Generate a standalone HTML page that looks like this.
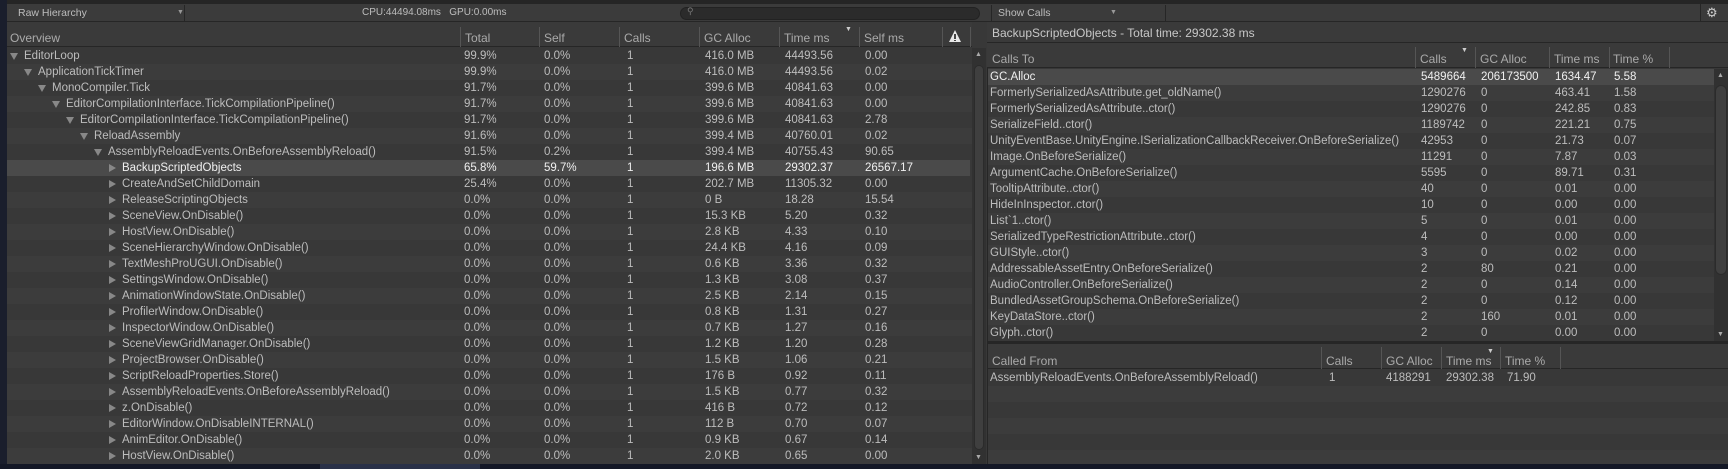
<!DOCTYPE html>
<html><head><meta charset="utf-8">
<style>
*{margin:0;padding:0;box-sizing:border-box}
body{width:1728px;height:469px;overflow:hidden;background:#161a26;font-family:"Liberation Sans",sans-serif;font-size:11.5px;color:#bdbdbd;position:relative}
.a{position:absolute;white-space:nowrap}
.r{position:absolute;height:16px;line-height:17px}
.r span{position:absolute;top:0;white-space:nowrap}
.o{background:#383838}.e{background:#3c3c3c}
.sel{background:#4a4a4a;color:#f0f0f0}
.sep{position:absolute;width:1px;background:#555}
.tri{position:absolute;top:4px;width:0;height:0}
.dn{border-left:4px solid transparent;border-right:4px solid transparent;border-top:7px solid #888;top:5px}
.rt{border-top:4px solid transparent;border-bottom:4px solid transparent;border-left:7px solid #888}
</style></head><body>
<div class="a" style="left:0;top:0;width:1728px;height:4px;background:#252525"></div>
<div class="a" style="left:0;top:0;width:7px;height:469px;background:#1a1e2c"></div>
<div class="a" style="left:7px;top:4px;width:1721px;height:18px;background:#3b3b3b;border-bottom:1px solid #262626"></div>
<div class="a" style="left:13px;top:5px;width:172px;height:16px;border-right:1px solid #262626;line-height:16px;font-size:10.5px;padding-left:5px">Raw Hierarchy<span style="position:absolute;left:164px;top:0;font-size:7px;color:#999">▼</span></div>
<div class="a" style="left:362px;top:5px;line-height:16px;font-size:10px">CPU:44494.08ms&nbsp;&nbsp;&nbsp;GPU:0.00ms</div>
<div class="a" style="left:680px;top:7px;width:300px;height:13px;border-radius:7px;background:#2b2b2b;border:1px solid #222"></div>
<div class="a" style="left:687px;top:6px;font-size:9px;color:#777">⚲</div>
<div class="a" style="left:991px;top:5px;width:175px;height:16px;border-left:1px solid #262626;border-right:1px solid #262626;line-height:16px;font-size:10.5px;padding-left:6px">Show Calls<span style="position:absolute;left:118px;top:0;font-size:7px;color:#999">▼</span></div>
<div class="a" style="left:1700px;top:4px;width:28px;height:18px;border-left:1px solid #262626;color:#ccc;font-size:13px;line-height:17px;padding-left:5px">⚙</div>

<div class="a" style="left:7px;top:22px;width:980px;height:442px;background:#383838"></div>
<div class="a" style="left:7px;top:22px;width:965px;height:25px;background:#3a3a3a;border-bottom:1px solid #262626"></div>
<div class="a" style="left:10px;top:31px;font-size:12px;color:#aaa">Overview</div>
<div class="sep" style="left:460px;top:27px;height:20px"></div><div class="a" style="left:465px;top:31px;font-size:12px;color:#aaa">Total</div>
<div class="sep" style="left:539px;top:27px;height:20px"></div><div class="a" style="left:544px;top:31px;font-size:12px;color:#aaa">Self</div>
<div class="sep" style="left:619px;top:27px;height:20px"></div><div class="a" style="left:624px;top:31px;font-size:12px;color:#aaa">Calls</div>
<div class="sep" style="left:699px;top:27px;height:20px"></div><div class="a" style="left:704px;top:31px;font-size:12px;color:#aaa">GC Alloc</div>
<div class="sep" style="left:779px;top:27px;height:20px"></div><div class="a" style="left:784px;top:31px;font-size:12px;color:#aaa">Time ms</div>
<div class="a" style="left:845px;top:26px;font-size:7px;color:#ccc">▼</div>
<div class="sep" style="left:859px;top:27px;height:20px"></div><div class="a" style="left:864px;top:31px;font-size:12px;color:#aaa">Self ms</div>
<div class="sep" style="left:942px;top:27px;height:20px"></div>
<div class="a" style="left:949px;top:30px;width:0;height:0;border-left:6px solid transparent;border-right:6px solid transparent;border-bottom:12px solid #e8e8e8"></div>
<div class="a" style="left:954px;top:34px;width:2px;height:5px;background:#444"></div>
<div class="a" style="left:954px;top:40px;width:2px;height:1px;background:#444"></div>
<div class="sep" style="left:970px;top:27px;height:20px"></div>
<div class="a" style="left:972px;top:48px;width:14px;height:416px;background:#313131"></div>
<div class="a" style="left:975px;top:51px;font-size:7px;color:#aaa">▲</div>
<div class="a" style="left:975px;top:454px;font-size:7px;color:#aaa">▼</div>
<div class="a" style="left:974px;top:65px;width:10px;height:385px;border-radius:5px;background:#3f3f3f;border:1px solid #2b2b2b"></div>

<div style="position:absolute;left:7px;top:48px;width:965px">
<div class="r o" style="top:0;width:965px"><i class="tri dn" style="left:3px"></i><span style="left:17px">EditorLoop</span><span style="left:457px">99.9%</span><span style="left:537px">0.0%</span><span style="left:620px">1</span><span style="left:698px">416.0 MB</span><span style="left:778px">44493.56</span><span style="left:858px">0.00</span></div>
<div class="r e" style="top:16px;width:965px"><i class="tri dn" style="left:17px"></i><span style="left:31px">ApplicationTickTimer</span><span style="left:457px">99.9%</span><span style="left:537px">0.0%</span><span style="left:620px">1</span><span style="left:698px">416.0 MB</span><span style="left:778px">44493.56</span><span style="left:858px">0.02</span></div>
<div class="r o" style="top:32px;width:965px"><i class="tri dn" style="left:31px"></i><span style="left:45px">MonoCompiler.Tick</span><span style="left:457px">91.7%</span><span style="left:537px">0.0%</span><span style="left:620px">1</span><span style="left:698px">399.6 MB</span><span style="left:778px">40841.63</span><span style="left:858px">0.00</span></div>
<div class="r e" style="top:48px;width:965px"><i class="tri dn" style="left:45px"></i><span style="left:59px">EditorCompilationInterface.TickCompilationPipeline()</span><span style="left:457px">91.7%</span><span style="left:537px">0.0%</span><span style="left:620px">1</span><span style="left:698px">399.6 MB</span><span style="left:778px">40841.63</span><span style="left:858px">0.00</span></div>
<div class="r o" style="top:64px;width:965px"><i class="tri dn" style="left:59px"></i><span style="left:73px">EditorCompilationInterface.TickCompilationPipeline()</span><span style="left:457px">91.7%</span><span style="left:537px">0.0%</span><span style="left:620px">1</span><span style="left:698px">399.6 MB</span><span style="left:778px">40841.63</span><span style="left:858px">2.78</span></div>
<div class="r e" style="top:80px;width:965px"><i class="tri dn" style="left:73px"></i><span style="left:87px">ReloadAssembly</span><span style="left:457px">91.6%</span><span style="left:537px">0.0%</span><span style="left:620px">1</span><span style="left:698px">399.4 MB</span><span style="left:778px">40760.01</span><span style="left:858px">0.02</span></div>
<div class="r o" style="top:96px;width:965px"><i class="tri dn" style="left:87px"></i><span style="left:101px">AssemblyReloadEvents.OnBeforeAssemblyReload()</span><span style="left:457px">91.5%</span><span style="left:537px">0.2%</span><span style="left:620px">1</span><span style="left:698px">399.4 MB</span><span style="left:778px">40755.43</span><span style="left:858px">90.65</span></div>
<div class="r sel" style="top:112px;width:963px"><i class="tri rt" style="left:102px"></i><span style="left:115px">BackupScriptedObjects</span><span style="left:457px">65.8%</span><span style="left:537px">59.7%</span><span style="left:620px">1</span><span style="left:698px">196.6 MB</span><span style="left:778px">29302.37</span><span style="left:858px">26567.17</span></div>
<div class="r o" style="top:128px;width:965px"><i class="tri rt" style="left:102px"></i><span style="left:115px">CreateAndSetChildDomain</span><span style="left:457px">25.4%</span><span style="left:537px">0.0%</span><span style="left:620px">1</span><span style="left:698px">202.7 MB</span><span style="left:778px">11305.32</span><span style="left:858px">0.00</span></div>
<div class="r e" style="top:144px;width:965px"><i class="tri rt" style="left:102px"></i><span style="left:115px">ReleaseScriptingObjects</span><span style="left:457px">0.0%</span><span style="left:537px">0.0%</span><span style="left:620px">1</span><span style="left:698px">0 B</span><span style="left:778px">18.28</span><span style="left:858px">15.54</span></div>
<div class="r o" style="top:160px;width:965px"><i class="tri rt" style="left:102px"></i><span style="left:115px">SceneView.OnDisable()</span><span style="left:457px">0.0%</span><span style="left:537px">0.0%</span><span style="left:620px">1</span><span style="left:698px">15.3 KB</span><span style="left:778px">5.20</span><span style="left:858px">0.32</span></div>
<div class="r e" style="top:176px;width:965px"><i class="tri rt" style="left:102px"></i><span style="left:115px">HostView.OnDisable()</span><span style="left:457px">0.0%</span><span style="left:537px">0.0%</span><span style="left:620px">1</span><span style="left:698px">2.8 KB</span><span style="left:778px">4.33</span><span style="left:858px">0.10</span></div>
<div class="r o" style="top:192px;width:965px"><i class="tri rt" style="left:102px"></i><span style="left:115px">SceneHierarchyWindow.OnDisable()</span><span style="left:457px">0.0%</span><span style="left:537px">0.0%</span><span style="left:620px">1</span><span style="left:698px">24.4 KB</span><span style="left:778px">4.16</span><span style="left:858px">0.09</span></div>
<div class="r e" style="top:208px;width:965px"><i class="tri rt" style="left:102px"></i><span style="left:115px">TextMeshProUGUI.OnDisable()</span><span style="left:457px">0.0%</span><span style="left:537px">0.0%</span><span style="left:620px">1</span><span style="left:698px">0.6 KB</span><span style="left:778px">3.36</span><span style="left:858px">0.32</span></div>
<div class="r o" style="top:224px;width:965px"><i class="tri rt" style="left:102px"></i><span style="left:115px">SettingsWindow.OnDisable()</span><span style="left:457px">0.0%</span><span style="left:537px">0.0%</span><span style="left:620px">1</span><span style="left:698px">1.3 KB</span><span style="left:778px">3.08</span><span style="left:858px">0.37</span></div>
<div class="r e" style="top:240px;width:965px"><i class="tri rt" style="left:102px"></i><span style="left:115px">AnimationWindowState.OnDisable()</span><span style="left:457px">0.0%</span><span style="left:537px">0.0%</span><span style="left:620px">1</span><span style="left:698px">2.5 KB</span><span style="left:778px">2.14</span><span style="left:858px">0.15</span></div>
<div class="r o" style="top:256px;width:965px"><i class="tri rt" style="left:102px"></i><span style="left:115px">ProfilerWindow.OnDisable()</span><span style="left:457px">0.0%</span><span style="left:537px">0.0%</span><span style="left:620px">1</span><span style="left:698px">0.8 KB</span><span style="left:778px">1.31</span><span style="left:858px">0.27</span></div>
<div class="r e" style="top:272px;width:965px"><i class="tri rt" style="left:102px"></i><span style="left:115px">InspectorWindow.OnDisable()</span><span style="left:457px">0.0%</span><span style="left:537px">0.0%</span><span style="left:620px">1</span><span style="left:698px">0.7 KB</span><span style="left:778px">1.27</span><span style="left:858px">0.16</span></div>
<div class="r o" style="top:288px;width:965px"><i class="tri rt" style="left:102px"></i><span style="left:115px">SceneViewGridManager.OnDisable()</span><span style="left:457px">0.0%</span><span style="left:537px">0.0%</span><span style="left:620px">1</span><span style="left:698px">1.2 KB</span><span style="left:778px">1.20</span><span style="left:858px">0.28</span></div>
<div class="r e" style="top:304px;width:965px"><i class="tri rt" style="left:102px"></i><span style="left:115px">ProjectBrowser.OnDisable()</span><span style="left:457px">0.0%</span><span style="left:537px">0.0%</span><span style="left:620px">1</span><span style="left:698px">1.5 KB</span><span style="left:778px">1.06</span><span style="left:858px">0.21</span></div>
<div class="r o" style="top:320px;width:965px"><i class="tri rt" style="left:102px"></i><span style="left:115px">ScriptReloadProperties.Store()</span><span style="left:457px">0.0%</span><span style="left:537px">0.0%</span><span style="left:620px">1</span><span style="left:698px">176 B</span><span style="left:778px">0.92</span><span style="left:858px">0.11</span></div>
<div class="r e" style="top:336px;width:965px"><i class="tri rt" style="left:102px"></i><span style="left:115px">AssemblyReloadEvents.OnBeforeAssemblyReload()</span><span style="left:457px">0.0%</span><span style="left:537px">0.0%</span><span style="left:620px">1</span><span style="left:698px">1.5 KB</span><span style="left:778px">0.77</span><span style="left:858px">0.32</span></div>
<div class="r o" style="top:352px;width:965px"><i class="tri rt" style="left:102px"></i><span style="left:115px">z.OnDisable()</span><span style="left:457px">0.0%</span><span style="left:537px">0.0%</span><span style="left:620px">1</span><span style="left:698px">416 B</span><span style="left:778px">0.72</span><span style="left:858px">0.12</span></div>
<div class="r e" style="top:368px;width:965px"><i class="tri rt" style="left:102px"></i><span style="left:115px">EditorWindow.OnDisableINTERNAL()</span><span style="left:457px">0.0%</span><span style="left:537px">0.0%</span><span style="left:620px">1</span><span style="left:698px">112 B</span><span style="left:778px">0.70</span><span style="left:858px">0.07</span></div>
<div class="r o" style="top:384px;width:965px"><i class="tri rt" style="left:102px"></i><span style="left:115px">AnimEditor.OnDisable()</span><span style="left:457px">0.0%</span><span style="left:537px">0.0%</span><span style="left:620px">1</span><span style="left:698px">0.9 KB</span><span style="left:778px">0.67</span><span style="left:858px">0.14</span></div>
<div class="r e" style="top:400px;width:965px"><i class="tri rt" style="left:102px"></i><span style="left:115px">HostView.OnDisable()</span><span style="left:457px">0.0%</span><span style="left:537px">0.0%</span><span style="left:620px">1</span><span style="left:698px">2.0 KB</span><span style="left:778px">0.65</span><span style="left:858px">0.00</span></div>
</div>

<div class="a" style="left:987px;top:22px;width:741px;height:442px;background:#383838;border-left:1px solid #262626"></div>
<div class="a" style="left:987px;top:22px;width:741px;height:21px;background:#3a3a3a;border-bottom:1px solid #262626"></div>
<div class="a" style="left:992px;top:26px;font-size:12px;color:#c8c8c8">BackupScriptedObjects - Total time: 29302.38 ms</div>
<div class="a" style="left:987px;top:43px;width:741px;height:25px;background:#3a3a3a;border-bottom:1px solid #262626"></div>
<div class="a" style="left:992px;top:52px;font-size:12px;color:#aaa">Calls To</div>
<div class="sep" style="left:1415px;top:47px;height:21px"></div><div class="a" style="left:1420px;top:52px;font-size:12px;color:#aaa">Calls</div>
<div class="a" style="left:1461px;top:47px;font-size:7px;color:#ccc">▼</div>
<div class="sep" style="left:1475px;top:47px;height:21px"></div><div class="a" style="left:1480px;top:52px;font-size:12px;color:#aaa">GC Alloc</div>
<div class="sep" style="left:1549px;top:47px;height:21px"></div><div class="a" style="left:1554px;top:52px;font-size:12px;color:#aaa">Time ms</div>
<div class="sep" style="left:1609px;top:47px;height:21px"></div><div class="a" style="left:1613px;top:52px;font-size:12px;color:#aaa">Time %</div>
<div class="sep" style="left:1669px;top:47px;height:21px"></div>
<div class="a" style="left:1714px;top:69px;width:14px;height:272px;background:#313131"></div>
<div class="a" style="left:1717px;top:72px;font-size:7px;color:#aaa">▲</div>
<div class="a" style="left:1717px;top:331px;font-size:7px;color:#aaa">▼</div>
<div class="a" style="left:1715px;top:85px;width:12px;height:190px;border-radius:6px;background:#3f3f3f;border:1px solid #2b2b2b"></div>

<div style="position:absolute;left:988px;top:69px;width:726px">
<div class="r sel" style="top:0;width:726px"><span style="left:2px">GC.Alloc</span><span style="left:433px">5489664</span><span style="left:493px">206173500</span><span style="left:567px">1634.47</span><span style="left:626px">5.58</span></div>
<div class="r e" style="top:16px;width:726px"><span style="left:2px">FormerlySerializedAsAttribute.get_oldName()</span><span style="left:433px">1290276</span><span style="left:493px">0</span><span style="left:567px">463.41</span><span style="left:626px">1.58</span></div>
<div class="r o" style="top:32px;width:726px"><span style="left:2px">FormerlySerializedAsAttribute..ctor()</span><span style="left:433px">1290276</span><span style="left:493px">0</span><span style="left:567px">242.85</span><span style="left:626px">0.83</span></div>
<div class="r e" style="top:48px;width:726px"><span style="left:2px">SerializeField..ctor()</span><span style="left:433px">1189742</span><span style="left:493px">0</span><span style="left:567px">221.21</span><span style="left:626px">0.75</span></div>
<div class="r o" style="top:64px;width:726px"><span style="left:2px">UnityEventBase.UnityEngine.ISerializationCallbackReceiver.OnBeforeSerialize()</span><span style="left:433px">42953</span><span style="left:493px">0</span><span style="left:567px">21.73</span><span style="left:626px">0.07</span></div>
<div class="r e" style="top:80px;width:726px"><span style="left:2px">Image.OnBeforeSerialize()</span><span style="left:433px">11291</span><span style="left:493px">0</span><span style="left:567px">7.87</span><span style="left:626px">0.03</span></div>
<div class="r o" style="top:96px;width:726px"><span style="left:2px">ArgumentCache.OnBeforeSerialize()</span><span style="left:433px">5595</span><span style="left:493px">0</span><span style="left:567px">89.71</span><span style="left:626px">0.31</span></div>
<div class="r e" style="top:112px;width:726px"><span style="left:2px">TooltipAttribute..ctor()</span><span style="left:433px">40</span><span style="left:493px">0</span><span style="left:567px">0.01</span><span style="left:626px">0.00</span></div>
<div class="r o" style="top:128px;width:726px"><span style="left:2px">HideInInspector..ctor()</span><span style="left:433px">10</span><span style="left:493px">0</span><span style="left:567px">0.00</span><span style="left:626px">0.00</span></div>
<div class="r e" style="top:144px;width:726px"><span style="left:2px">List`1..ctor()</span><span style="left:433px">5</span><span style="left:493px">0</span><span style="left:567px">0.01</span><span style="left:626px">0.00</span></div>
<div class="r o" style="top:160px;width:726px"><span style="left:2px">SerializedTypeRestrictionAttribute..ctor()</span><span style="left:433px">4</span><span style="left:493px">0</span><span style="left:567px">0.00</span><span style="left:626px">0.00</span></div>
<div class="r e" style="top:176px;width:726px"><span style="left:2px">GUIStyle..ctor()</span><span style="left:433px">3</span><span style="left:493px">0</span><span style="left:567px">0.02</span><span style="left:626px">0.00</span></div>
<div class="r o" style="top:192px;width:726px"><span style="left:2px">AddressableAssetEntry.OnBeforeSerialize()</span><span style="left:433px">2</span><span style="left:493px">80</span><span style="left:567px">0.21</span><span style="left:626px">0.00</span></div>
<div class="r e" style="top:208px;width:726px"><span style="left:2px">AudioController.OnBeforeSerialize()</span><span style="left:433px">2</span><span style="left:493px">0</span><span style="left:567px">0.14</span><span style="left:626px">0.00</span></div>
<div class="r o" style="top:224px;width:726px"><span style="left:2px">BundledAssetGroupSchema.OnBeforeSerialize()</span><span style="left:433px">2</span><span style="left:493px">0</span><span style="left:567px">0.12</span><span style="left:626px">0.00</span></div>
<div class="r e" style="top:240px;width:726px"><span style="left:2px">KeyDataStore..ctor()</span><span style="left:433px">2</span><span style="left:493px">160</span><span style="left:567px">0.01</span><span style="left:626px">0.00</span></div>
<div class="r o" style="top:256px;width:726px"><span style="left:2px">Glyph..ctor()</span><span style="left:433px">2</span><span style="left:493px">0</span><span style="left:567px">0.00</span><span style="left:626px">0.00</span></div>
</div>
<div class="a" style="left:988px;top:341px;width:740px;height:3px;background:#262626"></div>
<div class="a" style="left:988px;top:344px;width:740px;height:25px;background:#3a3a3a;border-bottom:1px solid #262626"></div>
<div class="a" style="left:992px;top:354px;font-size:12px;color:#aaa">Called From</div>
<div class="sep" style="left:1321px;top:347px;height:22px"></div><div class="a" style="left:1326px;top:354px;font-size:12px;color:#aaa">Calls</div>
<div class="sep" style="left:1381px;top:347px;height:22px"></div><div class="a" style="left:1386px;top:354px;font-size:12px;color:#aaa">GC Alloc</div>
<div class="sep" style="left:1441px;top:347px;height:22px"></div><div class="a" style="left:1446px;top:354px;font-size:12px;color:#aaa">Time ms</div>
<div class="a" style="left:1487px;top:348px;font-size:7px;color:#ccc">▼</div>
<div class="sep" style="left:1500px;top:347px;height:22px"></div><div class="a" style="left:1505px;top:354px;font-size:12px;color:#aaa">Time %</div>
<div class="sep" style="left:1560px;top:347px;height:22px"></div>
<div style="position:absolute;left:988px;top:370px;width:740px">
<div class="r o" style="top:0;width:740px"><span style="left:2px">AssemblyReloadEvents.OnBeforeAssemblyReload()</span><span style="left:341px">1</span><span style="left:398px">4188291</span><span style="left:458px;width:52px;overflow:hidden">29302.38</span><span style="left:519px">71.90</span></div>
<div class="r e" style="top:16px;width:740px"></div>
<div class="r o" style="top:32px;width:740px"></div>
<div class="r e" style="top:48px;width:740px"></div>
<div class="r o" style="top:64px;width:740px"></div>
<div class="r e" style="top:80px;width:740px;height:14px"></div>
</div>
<div class="a" style="left:0;top:464px;width:1728px;height:5px;background:#141826"></div>
<div class="a" style="left:320px;top:464px;width:160px;height:5px;background:#2a3148"></div>
</body></html>
